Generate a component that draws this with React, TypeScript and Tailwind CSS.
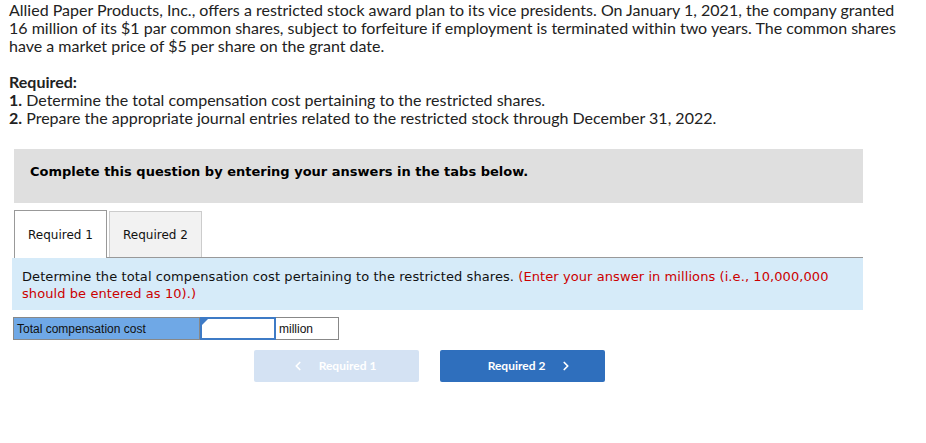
import React from 'react';
import { ChevronLeft, ChevronRight } from 'lucide-react';

const body = { fontFamily: 'Lato, "Liberation Sans", sans-serif' };
const verdana = { fontFamily: '"DejaVu Sans", Verdana, sans-serif' };
const arial = { fontFamily: '"Liberation Sans", Arial, sans-serif' };

export default function App() {
  return (
    <div className="w-[926px] h-[443px] bg-white text-[#222]">
      <div className="pl-[9px] pt-[1px] text-[16px] leading-[18px]" style={body}>
        <p>
          <span className="block">
            Allied Paper Products, Inc., offers a restricted stock award plan to its vice presidents. On January 1, 2021, the company granted
          </span>
          <span className="block">
            16 million of its $1 par common shares, subject to forfeiture if employment is terminated within two years. The common shares
          </span>
          <span className="block">have a market price of $5 per share on the grant date.</span>
        </p>
        <p className="mt-[18px] font-bold">Required:</p>
        <p>
          <b>1.</b> Determine the total compensation cost pertaining to the restricted shares.
        </p>
        <p>
          <b>2.</b> Prepare the appropriate journal entries related to the restricted stock through December 31, 2022.
        </p>
      </div>

      <div className="ml-[14px] w-[849px] mt-[22px]">
        <div className="h-[54px] bg-[#dfdfdf] flex items-center pl-[16px] pb-[9px]">
          <span className="text-[13px] font-bold text-black" style={verdana}>
            Complete this question by entering your answers in the tabs below.
          </span>
        </div>

        <div className="mt-[7px] flex items-end gap-[2px] border-b border-[#999] h-[48px]">
          <div
            className="w-[93px] h-[48px] -mb-px bg-white border border-b-0 border-[#999] flex items-center justify-center text-[12px] text-[#111]"
            style={verdana}
          >
            Required 1
          </div>
          <div
            className="w-[93px] h-[46px] bg-[#f2f2f2] border border-b-0 border-[#ccc] flex items-center justify-center text-[12px] text-[#111]"
            style={verdana}
          >
            Required 2
          </div>
        </div>

        <div
          className="-ml-[2px] w-[851px] h-[52px] bg-[#d6ebf9] pl-[10px] pt-[10px] text-[13px] leading-[17px] tracking-[0.08px]"
          style={verdana}
        >
          <span className="text-[#111]">Determine the total compensation cost pertaining to the restricted shares. </span>
          <span className="text-[#cc0000]">(Enter your answer in millions (i.e., 10,000,000 should be entered as 10).)</span>
        </div>
      </div>

      <div className="ml-[13px] mt-[7px] flex h-[23px] text-[12px]" style={arial}>
        <div className="w-[187px] bg-[#6fa8e6] border border-[#888] flex items-center pl-[3px] text-[#111]">
          Total compensation cost
        </div>
        <div className="relative w-[76px] bg-white border-2 border-[#3e7bc6]">
          <div className="absolute left-0 top-0 w-0 h-0 border-t-[6px] border-r-[6px] border-t-[#3e7bc6] border-r-transparent" />
        </div>
        <div className="w-[63px] bg-white border border-[#888] border-l-0 flex items-center pl-[3px] text-[#111]">
          million
        </div>
      </div>

      <div className="mt-[10px] ml-[254px] flex gap-[21px] text-[12px] font-bold text-white" style={body}>
        <div className="w-[165px] h-[32px] rounded-[2px] bg-[#d4e2f3] flex items-center justify-center gap-[14px] pr-[6px]">
          <ChevronLeft size={14} strokeWidth={3} />
          <span>Required 1</span>
        </div>
        <div className="w-[165px] h-[32px] rounded-[2px] bg-[#2f6fbd] flex items-center justify-center gap-[14px] pl-[16px]">
          <span>Required 2</span>
          <ChevronRight size={14} strokeWidth={3} />
        </div>
      </div>
    </div>
  );
}
